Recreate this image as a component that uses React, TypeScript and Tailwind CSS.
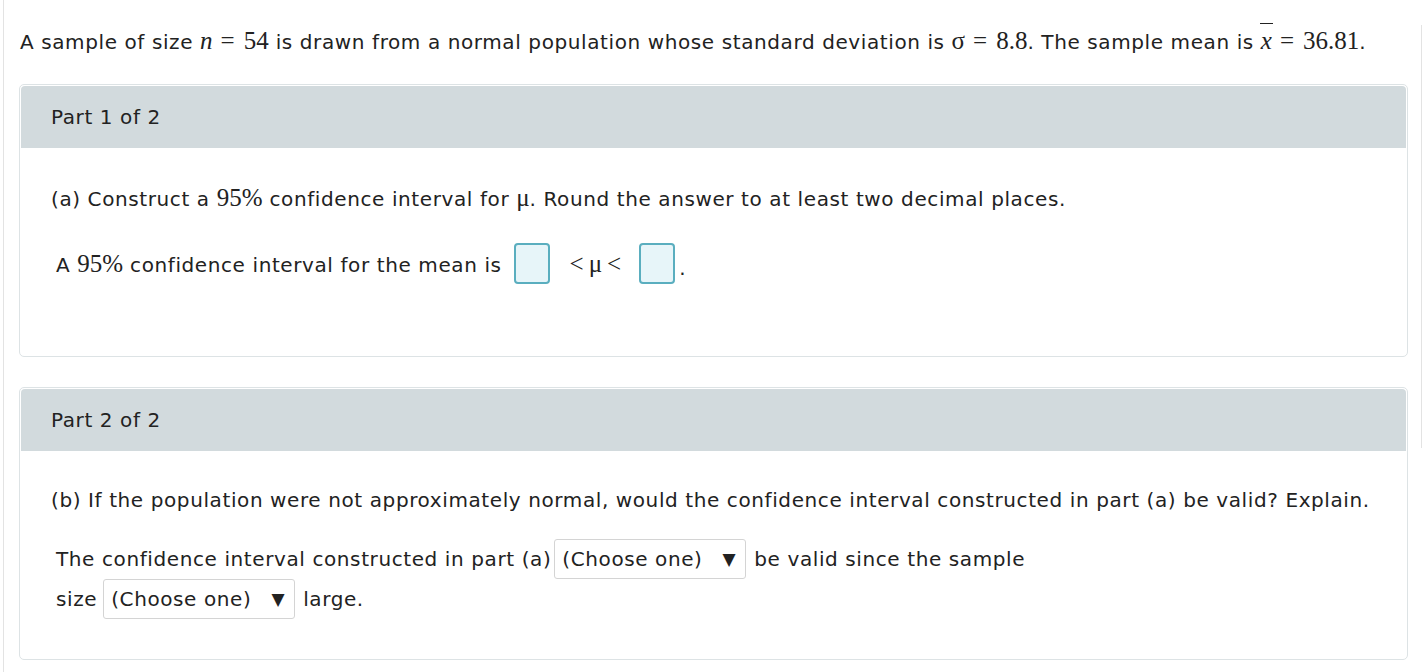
const sans = "font-['DejaVu_Sans',Verdana,sans-serif]";
const serif = "font-['Liberation_Serif','Times_New_Roman',serif]";

function M({ children }: { children: React.ReactNode }) {
  return <span className={`${serif} text-[25px] tracking-normal`}>{children}</span>;
}

function Eq() {
  return <span className="ml-[8px] mr-[9px]">=</span>;
}

function AnswerBox() {
  return (
    <span className="inline-block h-[41px] w-[36px] rounded-[4px] border-2 border-[#5aaebf] bg-[#e7f5f9] align-middle" />
  );
}

function Select() {
  return (
    <span className="inline-flex h-[40px] w-[192px] items-center justify-between rounded-[3px] border border-[#d4d4d4] bg-white pl-[7px] pr-[9px] align-middle">
      <span>(Choose one)</span>
      <span className="text-[17px]">▼</span>
    </span>
  );
}

function PartCard({ title, children }: { title: string; children: React.ReactNode }) {
  return (
    <div className="rounded-[5px] border border-[#dde3e5] bg-white p-[1px]">
      <div className="flex h-[62px] items-center rounded-t-[4px] bg-[#d2dadd] pl-[30px]">{title}</div>
      {children}
    </div>
  );
}

export default function App() {
  return (
    <div className={`${sans} relative min-h-[672px] bg-white text-[20px] tracking-[0.6px] text-[#222] leading-none`}>
      <div className="ml-[3px] min-h-[672px] border-l border-[#e3e3e3] pl-[15px] pr-[17px]">
        <div className="flex h-[80px] items-center pl-[1px]">
          <p>
            A sample of size{' '}
            <M>
              <i>n</i>
              <Eq />
              54
            </M>{' '}
            is drawn from a normal population whose standard deviation is{' '}
            <M>
              σ<Eq />8.8
            </M>
            . The sample mean is{' '}
            <M>
              <span className="relative inline-block">
                <span className="absolute left-[-1px] right-[-1px] top-[-5px] h-[1.5px] bg-[#222]" />
                <i>x</i>
              </span>
              <Eq />
              36.81
            </M>
            .
          </p>
        </div>

        <div className="mt-[4px]">
          <PartCard title="Part 1 of 2">
            <div className="h-[207px] pl-[30px]">
              <p className="pt-[37px]">
                (a) Construct a <M>95%</M> confidence interval for <M>μ</M>. Round the answer to at least two decimal places.
              </p>
              <div className="mt-[33px] flex items-center pl-[5px]">
                <span>
                  A <M>95%</M> confidence interval for the mean is
                </span>
                <span className="ml-[12px]">
                  <AnswerBox />
                </span>
                <span className={`${serif} ml-[20px] mr-[18px] text-[25px] tracking-normal`}>
                  &lt;<span className="mx-[5px]">μ</span>&lt;
                </span>
                <AnswerBox />
                <span className="ml-[4px] self-end pb-[6px]">.</span>
              </div>
            </div>
          </PartCard>
        </div>

        <div className="mt-[30px]">
          <PartCard title="Part 2 of 2">
            <div className="h-[207px] pl-[30px]">
              <p className="pt-[39px]">
                (b) If the population were not approximately normal, would the confidence interval constructed in part (a) be valid? Explain.
              </p>
              <div className="mt-[29px] pl-[5px]">
                <div className="flex h-[40px] items-center">
                  <span>The confidence interval constructed in part (a)</span>
                  <span className="ml-[3px]">
                    <Select />
                  </span>
                  <span className="ml-[8px]">be valid since the sample</span>
                </div>
                <div className="flex h-[40px] items-center">
                  <span>size</span>
                  <span className="ml-[6px]">
                    <Select />
                  </span>
                  <span className="ml-[8px]">large.</span>
                </div>
              </div>
            </div>
          </PartCard>
        </div>
      </div>
      <div className="absolute right-[3px] top-[25px] h-[423px] w-px bg-[#e3e3e3]" />
    </div>
  );
}
